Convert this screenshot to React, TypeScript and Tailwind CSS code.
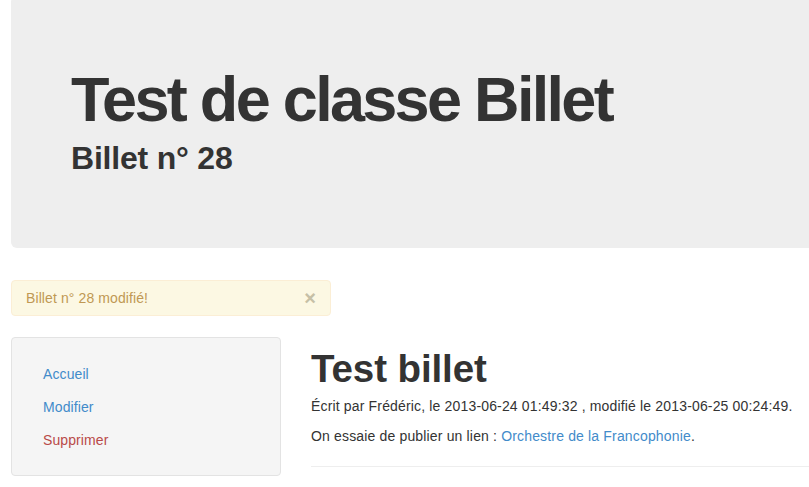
import React from 'react';

const font = "font-['Helvetica_Neue','Liberation_Sans',Arial,sans-serif]";

const App: React.FC = () => {
  return (
    <div className={`w-[809px] h-[487px] overflow-hidden bg-white text-[#333] ${font}`}>
      <div className="pl-[11px]">
        {/* Jumbotron */}
        <div className="mt-[-4px] h-[252px] w-[900px] rounded-[6px] bg-[#eeeeee] pl-[60px] pt-[69px]">
          <h1 className="text-[63px] font-bold leading-[1.1] tracking-[-2.7px] whitespace-nowrap">Test de classe Billet</h1>
          <h2 className="mt-[7px] text-[32px] font-bold leading-[1.1] tracking-[-0.2px]">Billet n° 28</h2>
        </div>

        {/* Alert */}
        <div className="mt-[32px] flex h-[36px] w-[320px] items-center justify-between rounded-[4px] border border-[#fbeed5] bg-[#fcf8e3] pl-[14px] pr-[14px] text-[14px] tracking-[0.1px] text-[#c09853]">
          <span>Billet n° 28 modifié!</span>
          <span className="text-[20px] font-bold leading-none text-[#c6c0a6]">×</span>
        </div>

        {/* Content row */}
        <div className="mt-[21px] flex gap-[30px]">
          <div className="h-[139px] w-[270px] shrink-0 rounded-[4px] border border-[#e3e3e3] bg-[#f5f5f5] pl-[31px] pt-[26px]">
            <ul className="flex flex-col gap-[13px] text-[14px] leading-[20px] tracking-[0.1px]">
              <li><a className="text-[#428bca]">Accueil</a></li>
              <li><a className="text-[#428bca]">Modifier</a></li>
              <li><a className="text-[#b94a48]">Supprimer</a></li>
            </ul>
          </div>
          <div className="flex-1 pt-[11px]">
            <h1 className="text-[38.5px] font-bold leading-[1.1] tracking-[-0.1px]">Test billet</h1>
            <p className="mt-[6px] text-[14px] leading-[20px] tracking-[0.16px] whitespace-nowrap">
              Écrit par Frédéric, le 2013-06-24 01:49:32 , modifié le 2013-06-25 00:24:49.
            </p>
            <p className="mt-[10px] text-[14px] leading-[20px] tracking-[0.16px] whitespace-nowrap">
              On essaie de publier un lien : <a className="text-[#428bca]">Orchestre de la Francophonie</a>.
            </p>
            <hr className="mt-[20px] border-0 border-t border-[#eeeeee]" />
          </div>
        </div>
      </div>
    </div>
  );
};

export default App;
